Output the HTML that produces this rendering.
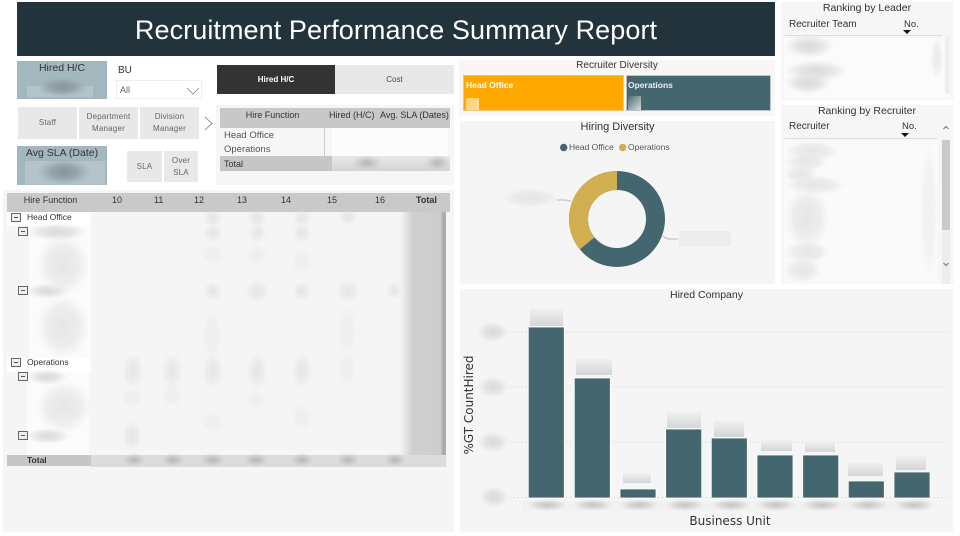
<!DOCTYPE html>
<html><head><meta charset="utf-8">
<style>
html,body{margin:0;padding:0;background:#fff}
#r{position:relative;width:960px;height:536px;overflow:hidden;background:#fff;font-family:"Liberation Sans",sans-serif;color:#333}
#r div{position:absolute;box-sizing:border-box}
.t{white-space:nowrap;line-height:1}
.c{text-align:center}
.b{background:#e8e8e8;color:#666;font-size:8px;text-align:center;line-height:12px;display:flex;align-items:center;justify-content:center;letter-spacing:.2px}
.mb{width:10px;height:9px;border:1px solid #666;background:#eee}
.mb:after{content:"";position:absolute;left:2px;top:3px;width:4px;height:1px;background:#555}
</style></head><body>
<div id="r">
<!-- banner -->
<div style="left:17px;top:2px;width:758px;height:54px;background:#22333b"></div>
<div class="t c" style="left:17px;top:17px;width:758px;font-size:27px;color:#fff;letter-spacing:.08px">Recruitment Performance Summary Report</div>

<!-- cards -->
<div style="left:17px;top:61px;width:90px;height:38px;background:#a3b7be"></div>
<div style="left:27px;top:86px;width:66px;height:11px;background:#b4c4ca"></div>
<div class="t" style="left:118px;top:66px;font-size:10px;color:#333">BU</div>
<div style="left:116px;top:80px;width:86px;height:19px;background:#fff;border:1px solid #eee"></div>
<div class="t" style="left:120px;top:86px;font-size:9px;color:#666">All</div>
<svg style="position:absolute;left:186px;top:86px" width="14" height="9"><path d="M1 2L7 8L13 2" fill="none" stroke="#888" stroke-width=".8"/></svg>
<div class="b" style="left:18px;top:107px;width:59px;height:32px">Staff</div>
<div class="b" style="left:79px;top:107px;width:59px;height:32px">Department<br>Manager</div>
<div class="b" style="left:140px;top:107px;width:59px;height:32px">Division<br>Manager</div>
<svg style="position:absolute;left:203px;top:116px" width="10" height="15"><path d="M2 1L9 7.500L2 14" fill="none" stroke="#777" stroke-width=".8"/></svg>
<div style="left:17px;top:146px;width:90px;height:39px;background:#a3b7be"></div>
<div style="left:25px;top:161px;width:80px;height:24px;background:#b4c4ca"></div>
<div class="b" style="left:127px;top:151px;width:35px;height:31px">SLA</div>
<div class="b" style="left:164px;top:151px;width:34px;height:31px">Over<br>SLA</div>

<!-- toggle -->
<div style="left:217px;top:65px;width:118px;height:29px;background:#333;color:#fff;font-size:8px;font-weight:bold;text-align:center;line-height:29px">Hired H/C</div>
<div style="left:335px;top:65px;width:119px;height:29px;background:#e8e8e8;color:#444;font-size:8px;text-align:center;line-height:29px">Cost</div>

<!-- small table -->
<div style="left:216px;top:105px;width:238px;height:80px;background:#f6f6f6"></div>
<div style="left:220px;top:108px;width:230px;height:20px;background:#c8c8c8"></div>
<div class="t c" style="left:220px;top:111px;width:105px;font-size:9px;color:#333">Hire Function</div>
<div class="t" style="left:329px;top:111px;font-size:9px;color:#333">Hired (H/C)</div>
<div class="t" style="left:380px;top:111px;font-size:9px;color:#333">Avg. SLA (Dates)</div>
<div class="t" style="left:224px;top:131px;font-size:9.500px;color:#555">Head Office</div>
<div class="t" style="left:224px;top:145px;font-size:9.500px;color:#555">Operations</div>
<div style="left:220px;top:156px;width:112px;height:15px;background:#c6c6c6"></div>
<div class="t" style="left:224px;top:160px;font-size:9px;color:#333">Total</div>
<div style="left:324px;top:128px;width:1px;height:28px;background:#ccc"></div>
<div style="left:332px;top:128px;width:116px;height:28px;background:#fcfcfc"></div>
<div style="left:332px;top:156px;width:118px;height:15px;background:linear-gradient(#e8e8e8,#d4d4d4)"></div>

<!-- matrix -->
<div style="left:3px;top:190px;width:451px;height:342px;background:#f5f5f5"></div>
<div style="left:7px;top:193px;width:443px;height:19px;background:#c9c9c9"></div>
<div class="t c" style="left:7px;top:195.500px;width:87px;font-size:9px;color:#333">Hire Function</div>
<div class="t" style="left:112px;top:195.500px;font-size:9px;color:#333">10</div>
<div class="t" style="left:154px;top:195.500px;font-size:9px;color:#333">11</div>
<div class="t" style="left:194px;top:195.500px;font-size:9px;color:#333">12</div>
<div class="t" style="left:237px;top:195.500px;font-size:9px;color:#333">13</div>
<div class="t" style="left:281px;top:195.500px;font-size:9px;color:#333">14</div>
<div class="t" style="left:327px;top:195.500px;font-size:9px;color:#333">15</div>
<div class="t" style="left:375px;top:195.500px;font-size:9px;color:#333">16</div>
<div class="t" style="left:416px;top:195.500px;font-size:9px;font-weight:bold;color:#333">Total</div>

<div style="left:7px;top:212px;width:84px;height:14px;background:#fff"></div>
<div style="left:7px;top:358px;width:84px;height:14px;background:#fff"></div>
<div style="left:29px;top:226px;width:62px;height:132px;background:#fbfbfb"></div>
<div style="left:27px;top:372px;width:62px;height:83px;background:#fbfbfb"></div>
<div style="left:400px;top:212px;width:46px;height:244px;background:linear-gradient(to right,rgba(205,205,205,0),#cfcfcf 28%,#cdcdcd 88%,#a8a8a8 94%,#b0b0b0 100%)"></div>
<div style="left:7px;top:455px;width:84px;height:11px;background:#c6c6c6"></div>
<div style="left:91px;top:455px;width:355px;height:12px;background:#dcdcdc"></div>

<!-- recruiter diversity -->
<div style="left:459px;top:60px;width:316px;height:56px;background:#f9f7f3"></div>
<div style="left:463px;top:75px;width:161px;height:36px;background:#ffa800;border:1px solid #f4c76a"></div>
<div style="left:626px;top:75px;width:145px;height:36px;background:#44666f;border:1px solid #b8c6ca"></div>
<div style="left:466px;top:98px;width:13px;height:12px;background:linear-gradient(135deg,#ffcb66,#ffe0a6)"></div>
<div style="left:628px;top:96px;width:13px;height:14px;background:linear-gradient(135deg,#4e6b72,#d6dcdc)"></div>

<!-- hiring diversity -->
<div style="left:460px;top:121px;width:315px;height:163px;background:#f5f5f5"></div>
<svg style="position:absolute;left:560px;top:141px" width="20" height="14"><circle cx="3.700" cy="6.500" r="3.700" fill="#44666f"/></svg>
<svg style="position:absolute;left:619px;top:141px" width="10" height="14"><circle cx="3.700" cy="6.500" r="3.700" fill="#d1ae50"/></svg>
<svg style="position:absolute;left:560px;top:165px" width="114" height="110">
<circle cx="57" cy="54" r="38.500" fill="none" stroke="#44666f" stroke-width="19"/>
<path d="M57 15.500A38.500 38.500 0 0 0 27.200 78.400" fill="none" stroke="#d1ae50" stroke-width="19"/>
</svg>
<svg style="position:absolute;left:555px;top:195px" width="20" height="12"><path d="M2 5H10Q13 5 16 6.500" fill="none" stroke="#bbb"/></svg>
<div style="left:679px;top:231px;width:52px;height:15px;background:#ececec"></div>
<svg style="position:absolute;left:662px;top:231px" width="18" height="12"><path d="M1 5Q4 8 8 8H16" fill="none" stroke="#bbb"/></svg>

<!-- ranking panels -->
<div style="left:781px;top:2px;width:172px;height:98px;background:#f6f6f6"></div>
<div style="left:785px;top:35px;width:157px;height:1px;background:#ddd"></div>
<div style="left:784px;top:38px;width:165px;height:60px;background:#fbfbfb"></div>
<div style="left:945px;top:38px;width:4px;height:56px;background:#eee"></div>
<div style="left:781px;top:105px;width:172px;height:179px;background:#f6f6f6"></div>
<div style="left:785px;top:138px;width:152px;height:1px;background:#ddd"></div>
<div style="left:784px;top:140px;width:154px;height:143px;background:#fafafa"></div>
<div style="left:942px;top:140px;width:8px;height:90px;background:#c9c9c9"></div>
<div style="left:942px;top:230px;width:8px;height:54px;background:#ededed"></div>
<svg style="position:absolute;left:942px;top:124px" width="8" height="8"><path d="M1.500 5L4 2.500L6.500 5" fill="none" stroke="#555" stroke-width=".8"/></svg>
<svg style="position:absolute;left:942px;top:260px" width="8" height="8"><path d="M1.500 3L4 5.500L6.500 3" fill="none" stroke="#555" stroke-width=".8"/></svg>

<!-- hired company -->
<div style="left:460px;top:289px;width:493px;height:243px;background:#f5f5f5"></div>
<svg style="position:absolute;left:455px;top:285px" width="505" height="251">
<defs>
<radialGradient id="d"><stop offset="0" stop-color="#b6b6b6"/><stop offset=".45" stop-color="#c4c4c4" stop-opacity=".8"/><stop offset="1" stop-color="#ccc" stop-opacity="0"/></radialGradient>
<radialGradient id="m"><stop offset="0" stop-color="#cecece"/><stop offset=".5" stop-color="#d6d6d6" stop-opacity=".8"/><stop offset="1" stop-color="#ddd" stop-opacity="0"/></radialGradient>
<radialGradient id="l"><stop offset="0" stop-color="#e2e2e2"/><stop offset=".6" stop-color="#e6e6e6" stop-opacity=".8"/><stop offset="1" stop-color="#eee" stop-opacity="0"/></radialGradient>
<radialGradient id="k"><stop offset="0" stop-color="#84949c"/><stop offset=".5" stop-color="#909fa7" stop-opacity=".8"/><stop offset="1" stop-color="#a3b7be" stop-opacity="0"/></radialGradient>
<linearGradient id="lg" x1="0" y1="0" x2="0" y2="1"><stop offset="0" stop-color="#f0f0f0"/><stop offset="1" stop-color="#d2d6d8"/></linearGradient></defs>
<g stroke="#ccc" stroke-dasharray="1 3" stroke-width="1"><path d="M55 47H495M55 102H495M55 157H495M55 212.500H495"/></g>
<g fill="url(#m)" opacity=".7"><rect x="22" y="36" width="32" height="22"/><rect x="22" y="91" width="32" height="22"/><rect x="22" y="146" width="32" height="22"/><rect x="24" y="201" width="30" height="22"/></g>
<rect x="67" y="216" width="408" height="10" fill="#f1f1f1"/>
<g fill="#44666f" stroke="#fff" stroke-width=".8"><rect x="73.300" y="42" width="36" height="171"/><rect x="119.300" y="93" width="36" height="120"/><rect x="165" y="204" width="36" height="9"/><rect x="210.700" y="144" width="36" height="69"/><rect x="256.300" y="153" width="36" height="60"/><rect x="302" y="170" width="36" height="43"/><rect x="347.700" y="170" width="36" height="43"/><rect x="393.300" y="196" width="36" height="17"/><rect x="439" y="187" width="36" height="26"/></g>
<g fill="url(#lg)"><rect x="75" y="24" width="33" height="17"/><rect x="121" y="74" width="36" height="16"/><rect x="168" y="188" width="28" height="10"/><rect x="212" y="127" width="34" height="16"/><rect x="259" y="136" width="30" height="16"/><rect x="306" y="155" width="31" height="11"/><rect x="350" y="157" width="30" height="10"/><rect x="393" y="178" width="35" height="13"/><rect x="441" y="171" width="30" height="14"/></g>
<g fill="url(#d)" opacity=".75"><rect x="72" y="214" width="40" height="12"/><rect x="118" y="214" width="40" height="12"/><rect x="164" y="214" width="40" height="12"/><rect x="210" y="214" width="40" height="12"/><rect x="256" y="214" width="40" height="12"/><rect x="301" y="214" width="40" height="12"/><rect x="347" y="214" width="40" height="12"/><rect x="393" y="214" width="40" height="12"/><rect x="439" y="214" width="40" height="12"/></g>
<text x="275" y="240" text-anchor="middle" font-family="'DejaVu Sans',sans-serif" font-size="12" fill="#333">Business Unit</text>
<text transform="translate(18 120) rotate(-90)" text-anchor="middle" font-family="'DejaVu Sans',sans-serif" font-size="12" fill="#333">%GT CountHired</text>
</svg>

<!-- soft obscured-value smudges -->
<svg style="position:absolute;left:0;top:0" width="960" height="536">
<g fill="url(#k)"><rect x="35" y="76" width="55" height="22"/><rect x="35" y="158" width="58" height="28"/></g>
<g fill="url(#d)"><rect x="352" y="155" width="30" height="16"/><rect x="425" y="155" width="25" height="16"/>
<rect x="122" y="453" width="24" height="14"/><rect x="161" y="453" width="24" height="14"/><rect x="200" y="453" width="26" height="14"/><rect x="244" y="453" width="24" height="14"/><rect x="290" y="453" width="24" height="14"/><rect x="336" y="453" width="24" height="14"/><rect x="384" y="453" width="22" height="14"/></g>
<g fill="url(#m)" opacity=".75">
<rect x="26" y="223" width="62" height="18"/><rect x="26" y="283" width="44" height="16"/><rect x="26" y="369" width="42" height="16"/><rect x="26" y="428" width="44" height="16"/>
<rect x="784" y="34" width="50" height="24"/><rect x="784" y="60" width="64" height="22"/><rect x="784" y="72" width="48" height="22"/>
</g>
<g fill="url(#m)" opacity=".4">
<rect x="203" y="208" width="20" height="20"/><rect x="203" y="223" width="20" height="20"/><rect x="247" y="208" width="20" height="20"/><rect x="247" y="223" width="20" height="20"/><rect x="292" y="208" width="20" height="20"/><rect x="292" y="223" width="20" height="20"/><rect x="338" y="208" width="20" height="18"/>
<rect x="203" y="281" width="20" height="20"/><rect x="245" y="279" width="24" height="24"/><rect x="292" y="281" width="20" height="20"/><rect x="336" y="279" width="24" height="24"/><rect x="385" y="282" width="18" height="18"/>
<rect x="122" y="352" width="22" height="38"/><rect x="161" y="352" width="22" height="38"/><rect x="202" y="352" width="22" height="38"/><rect x="246" y="352" width="22" height="38"/><rect x="291" y="352" width="22" height="38"/><rect x="122" y="420" width="20" height="32"/>
<rect x="930" y="36" width="14" height="44"/>
</g>
<g fill="url(#l)" opacity=".45">
<rect x="338" y="352" width="18" height="36"/><rect x="122" y="386" width="20" height="24"/><rect x="161" y="382" width="22" height="26"/><rect x="246" y="389" width="20" height="20"/><rect x="202" y="411" width="22" height="22"/><rect x="291" y="404" width="22" height="26"/>
<rect x="202" y="243" width="22" height="22"/><rect x="246" y="243" width="22" height="24"/><rect x="291" y="249" width="22" height="26"/><rect x="202" y="309" width="20" height="52"/><rect x="337" y="304" width="20" height="52"/>
<rect x="920" y="140" width="18" height="142"/>
</g>
<g fill="url(#l)" opacity=".85">
<rect x="36" y="234" width="54" height="62"/><rect x="36" y="294" width="54" height="66"/><rect x="36" y="380" width="56" height="54"/>
<rect x="500" y="188" width="60" height="20"/>
<rect x="784" y="140" width="56" height="22"/><rect x="784" y="152" width="44" height="20"/><rect x="784" y="164" width="34" height="20"/><rect x="784" y="175" width="62" height="20"/><rect x="784" y="186" width="46" height="64"/><rect x="784" y="240" width="46" height="24"/><rect x="784" y="256" width="38" height="28"/>
</g>
</svg>

<!-- text above smudges -->
<div class="t c" style="left:17px;top:63px;width:90px;font-size:10.5px;color:#333">Hired H/C</div>
<div class="t c" style="left:17px;top:148px;width:90px;font-size:10.500px;color:#333">Avg SLA (Date)</div>
<div class="mb" style="left:11px;top:213px"></div>
<div class="t" style="left:27px;top:213px;font-size:8.500px;color:#333">Head Office</div>
<div class="mb" style="left:18px;top:227px"></div>
<div class="mb" style="left:18px;top:286px"></div>
<div class="mb" style="left:11px;top:358px"></div>
<div class="t" style="left:27px;top:358px;font-size:8.500px;color:#333">Operations</div>
<div class="mb" style="left:18px;top:372px"></div>
<div class="mb" style="left:18px;top:431px"></div>
<div class="t" style="left:27px;top:456px;font-size:8.500px;font-weight:bold;color:#333">Total</div>
<div class="t c" style="left:459px;top:61px;width:316px;font-size:10px;color:#333">Recruiter Diversity</div>
<div class="t" style="left:466px;top:81px;font-size:8.500px;font-weight:bold;color:#fff">Head Office</div>
<div class="t" style="left:628px;top:81px;font-size:8.500px;font-weight:bold;color:#eef">Operations</div>
<div class="t c" style="left:460px;top:122px;width:315px;font-size:11px;color:#333">Hiring Diversity</div>
<div class="t" style="left:569px;top:143px;font-size:8.500px;color:#555">Head Office</div>
<div class="t" style="left:628px;top:143px;font-size:8.500px;color:#555">Operations</div>
<div class="t c" style="left:781px;top:3px;width:172px;font-size:10.500px;color:#333">Ranking by Leader</div>
<div class="t" style="left:789px;top:20px;font-size:10px;color:#333">Recruiter Team</div>
<div class="t" style="left:904px;top:20px;font-size:9.500px;color:#333">No.</div>
<svg style="position:absolute;left:902px;top:29px" width="12" height="6"><path d="M1 1H9L5 5Z" fill="#111"/></svg>
<div class="t c" style="left:781px;top:106px;width:172px;font-size:10.500px;color:#333">Ranking by Recruiter</div>
<div class="t" style="left:789px;top:122px;font-size:10px;color:#333">Recruiter</div>
<div class="t" style="left:902px;top:122px;font-size:9.500px;color:#333">No.</div>
<svg style="position:absolute;left:900px;top:132px" width="12" height="6"><path d="M1 1H9L5 5Z" fill="#111"/></svg>
<div class="t c" style="left:460px;top:290px;width:493px;font-size:10.500px;color:#333">Hired Company</div>
</div>
</body></html>
